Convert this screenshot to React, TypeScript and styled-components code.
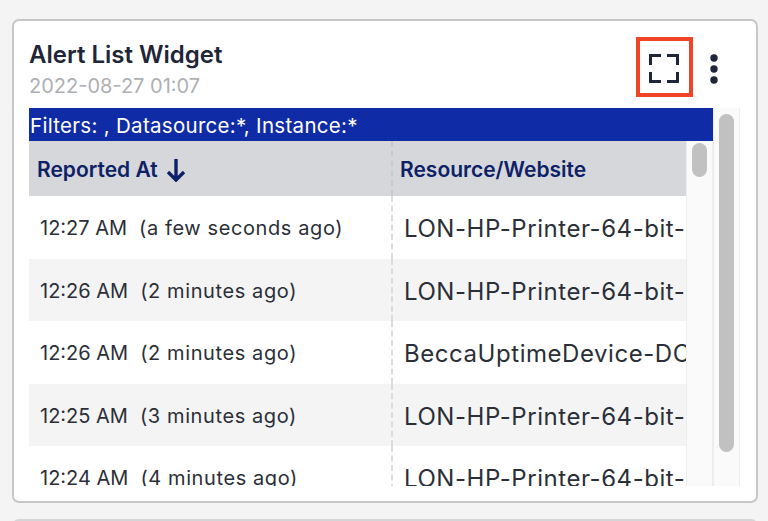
import React from 'react';
import styled, { createGlobalStyle } from 'styled-components';

const GlobalStyle = createGlobalStyle`
  html, body {
    margin: 0;
    padding: 0;
    height: 100%;
    overflow: hidden;
    background: #f4f4f4;
    font-family: 'Inter', 'Liberation Sans', sans-serif;
  }
`;

const Page = styled.div`
  width: 768px;
  height: 521px;
  box-sizing: border-box;
  padding: 19px 10px 0 12px;
  display: flex;
  flex-direction: column;
  gap: 16px;
  overflow: hidden;
`;

const Card = styled.div`
  flex: none;
  height: 484px;
  box-sizing: border-box;
  background: #fff;
  border: 2px solid #c6c7c9;
  border-radius: 7px;
  padding: 0 16px 15px 15px;
  display: flex;
  flex-direction: column;
`;

const NextCard = styled.div`
  flex: none;
  height: 40px;
  box-sizing: border-box;
  background: #f4f4f4;
  border: 2px solid #d4d5d7;
  border-bottom: 0;
  border-radius: 7px 7px 0 0;
`;

const Header = styled.div`
  flex: none;
  height: 87px;
  display: flex;
  justify-content: space-between;
  align-items: flex-start;
`;

const Titles = styled.div`
  padding-top: 19px;
`;

const Title = styled.div`
  font-size: 24px;
  line-height: 29px;
  font-weight: 600;
  color: #1e2638;
`;

const Stamp = styled.div`
  margin-top: 6px;
  font-size: 20px;
  line-height: 23px;
  color: #aeb0b4;
`;

const Actions = styled.div`
  display: flex;
  align-items: flex-start;
  padding-top: 16px;
  margin-right: 22px;
  gap: 17px;
`;

const Highlight = styled.button`
  width: 57px;
  height: 60px;
  box-sizing: border-box;
  padding: 3px 2px 0 0;
  background: #fff;
  border: 4px solid #ef4426;
  display: flex;
  align-items: center;
  justify-content: center;
`;

const MoreButton = styled.div`
  height: 60px;
  padding-top: 4px;
  box-sizing: border-box;
  display: flex;
  align-items: center;
`;

const Body = styled.div`
  flex: 1;
  min-height: 0;
  display: flex;
`;

const Main = styled.div`
  width: 684px;
  flex: none;
  display: flex;
  flex-direction: column;
  overflow: hidden;
`;

const FilterBar = styled.div`
  flex: none;
  height: 33px;
  box-sizing: border-box;
  padding: 2px 0 0 1px;
  background: #0f2ca6;
  color: #fff;
  font-size: 20.5px;
  line-height: 31px;
  letter-spacing: 0.3px;
  white-space: nowrap;
`;

const TableWrap = styled.div`
  flex: 1;
  min-height: 0;
  display: flex;
`;

const Table = styled.div`
  width: 657px;
  flex: none;
  overflow: hidden;
`;

const Row = styled.div<{ $shaded?: boolean; $height: number }>`
  height: ${({ $height }) => $height}px;
  display: grid;
  grid-template-columns: 362px 1fr;
  background: ${({ $shaded }) => ($shaded ? '#f4f4f4' : '#fff')};
`;

const HeadRow = styled.div`
  height: 55px;
  display: grid;
  grid-template-columns: 362px 1fr;
  background: #d6d7db;
`;

const HeadCell = styled.div<{ $first?: boolean }>`
  display: flex;
  align-items: center;
  gap: 8px;
  padding: 2px 0 0 ${({ $first }) => ($first ? '8px' : '7px')};
  color: #0d2166;
  font-size: 21px;
  font-weight: 600;
  border-left: ${({ $first }) => ($first ? '0' : '2px dashed #c9cacc')};
  white-space: nowrap;
`;

const TimeCell = styled.div`
  display: flex;
  gap: 12px;
  padding: 19px 0 0 11px;
  color: #2b2f38;
  font-size: 20px;
  line-height: 26px;
  white-space: nowrap;
`;

const Ago = styled.span`
  letter-spacing: 0.6px;
`;

const ResourceCell = styled.div`
  padding: 18px 0 0 11px;
  color: #2b2f38;
  font-size: 24px;
  line-height: 30px;
  letter-spacing: 0.55px;
  white-space: nowrap;
  overflow: hidden;
  border-left: 2px dashed #dcdcde;
`;

const Track = styled.div<{ $width: number }>`
  width: ${({ $width }) => $width}px;
  flex: none;
  box-sizing: border-box;
  background: #fafafa;
  border-left: 1px solid #ededed;
  border-right: 1px solid #ededed;
`;

const Thumb = styled.div<{ $height: number; $width: number; $top: number }>`
  width: ${({ $width }) => $width}px;
  height: ${({ $height }) => $height}px;
  margin: ${({ $top }) => $top}px auto 0;
  background: #c1c1c1;
  border-radius: 8px;
`;

const rows = [
  { time: '12:27 AM', ago: '(a few seconds ago)', name: 'LON-HP-Printer-64-bit-', height: 63 },
  { time: '12:26 AM', ago: '(2 minutes ago)', name: 'LON-HP-Printer-64-bit-', height: 62 },
  { time: '12:26 AM', ago: '(2 minutes ago)', name: 'BeccaUptimeDevice-DC', height: 63 },
  { time: '12:25 AM', ago: '(3 minutes ago)', name: 'LON-HP-Printer-64-bit-', height: 62 },
  { time: '12:24 AM', ago: '(4 minutes ago)', name: 'LON-HP-Printer-64-bit-', height: 63 },
];

const App: React.FC = () => (
  <Page>
    <GlobalStyle />
    <Card>
      <Header>
        <Titles>
          <Title>Alert List Widget</Title>
          <Stamp>2022-08-27 01:07</Stamp>
        </Titles>
        <Actions>
          <Highlight aria-label="Expand">
            <svg width="30" height="29" viewBox="0 0 30 29" fill="none" stroke="#1e2638" strokeWidth="3">
              <path d="M12 1.5H1.5V11M18 1.5H28.5V11M12 27.5H1.5V18M18 27.5H28.5V18" />
            </svg>
          </Highlight>
          <MoreButton>
            <svg width="8" height="30" viewBox="0 0 8 30" fill="#1e2638">
              <circle cx="4" cy="4" r="3.7" />
              <circle cx="4" cy="15" r="3.7" />
              <circle cx="4" cy="26" r="3.7" />
            </svg>
          </MoreButton>
        </Actions>
      </Header>
      <Body>
        <Main>
          <FilterBar>Filters: , Datasource:*, Instance:*</FilterBar>
          <TableWrap>
            <Table>
              <HeadRow>
                <HeadCell $first>
                  Reported At
                  <svg width="20" height="24" viewBox="0 0 20 24" fill="none" stroke="#0d2166" strokeWidth="3.4">
                    <path d="M10 1V22M2 14L10 22L18 14" />
                  </svg>
                </HeadCell>
                <HeadCell>Resource/Website</HeadCell>
              </HeadRow>
              {rows.map((row, i) => (
                <Row key={i} $shaded={i % 2 === 1} $height={row.height}>
                  <TimeCell>
                    <span>{row.time}</span>
                    <Ago>{row.ago}</Ago>
                  </TimeCell>
                  <ResourceCell>{row.name}</ResourceCell>
                </Row>
              ))}
            </Table>
            <Track $width={27}>
              <Thumb $width={15} $height={34} $top={2} />
            </Track>
          </TableWrap>
        </Main>
        <Track $width={27}>
          <Thumb $width={15} $height={338} $top={6} />
        </Track>
      </Body>
    </Card>
    <NextCard />
  </Page>
);

export default App;
